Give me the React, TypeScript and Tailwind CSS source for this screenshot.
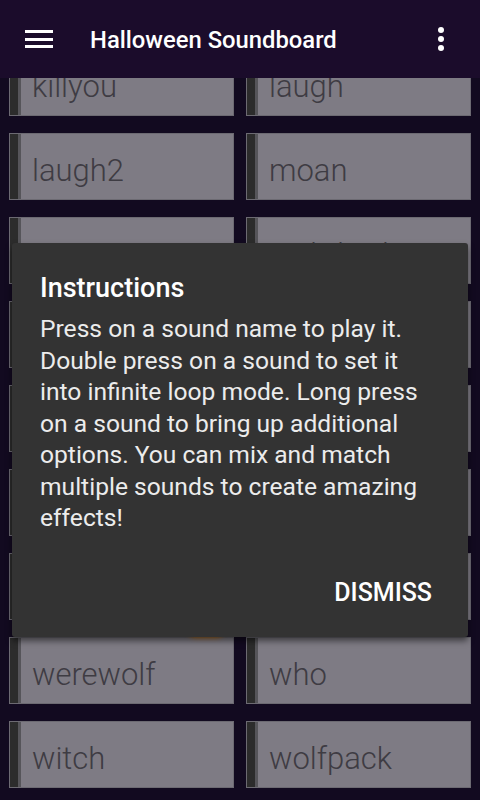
import React from 'react';

const sounds = [
  'killyou', 'laugh',
  'laugh2', 'moan',
  'moan2', 'nightbirds',
  'scream', 'scream2',
  'skeleton', 'spooky',
  'thunder', 'vampire',
  'whisper', 'wind',
  'werewolf', 'who',
  'witch', 'wolfpack',
];

const bodyLines = [
  'Press on a sound name to play it.',
  'Double press on a sound to set it',
  'into infinite loop mode. Long press',
  'on a sound to bring up additional',
  'options. You can mix and match',
  'multiple sounds to create amazing',
  'effects!',
];

function SoundButton({ name }: { name: string }) {
  return (
    <div className="flex h-[67px] border border-[#6c6a72] bg-[#7e7b84]">
      <div className="w-[8px] bg-[#2c2c2c]" />
      <div className="w-[3px] bg-[#56555a]" />
      <div className="flex flex-1 items-center pl-[11px] pt-[10px] text-[31px] font-light text-[#3e3c43]">
        {name}
      </div>
    </div>
  );
}

export default function App() {
  return (
    <div
      className="relative h-[800px] w-[480px] overflow-hidden bg-[#120a20]"
      style={{ fontFamily: 'Roboto, "Noto Sans", sans-serif' }}
    >
      {/* Toolbar */}
      <header className="relative z-10 flex h-[78px] items-center bg-[#1b0c2b] text-white">
        <div className="ml-[25px] flex w-[28px] flex-col gap-[4.5px]">
          <span className="h-[3px] bg-white" />
          <span className="h-[3px] bg-white" />
          <span className="h-[3px] bg-white" />
        </div>
        <h1 className="ml-[37px] mt-[3px] text-[23.8px] font-medium">Halloween Soundboard</h1>
        <div className="ml-auto mr-[36px] flex flex-col gap-[3px]">
          <span className="h-[6px] w-[6px] rounded-full bg-white" />
          <span className="h-[6px] w-[6px] rounded-full bg-white" />
          <span className="h-[6px] w-[6px] rounded-full bg-white" />
        </div>
      </header>

      {/* Sound grid */}
      <main className="-mt-[29px] grid grid-cols-2 gap-x-[12px] gap-y-[17px] px-[9px]">
        {sounds.map((s) => (
          <SoundButton key={s} name={s} />
        ))}
      </main>

      {/* glow peeking under dialog */}
      <div className="absolute left-[186px] top-[618px] h-[20px] w-[40px] rounded-full bg-[#b8701f] blur-[2px]" />

      {/* Instructions dialog */}
      <div className="absolute left-[12px] top-[243px] w-[456px] rounded-[3px] bg-[#333333] pb-[28px] pl-[28px] pr-[36px] pt-[29px] shadow-[0_4px_6px_rgba(0,0,0,0.5)]">
        <h2 className="text-[27px] font-medium leading-[32px] text-white">Instructions</h2>
        <p className="mt-[9px] text-[24.6px] leading-[31.5px] text-[#ececec]">
          {bodyLines.map((l) => (
            <span key={l} className="block whitespace-nowrap">
              {l}
            </span>
          ))}
        </p>
        <div className="mt-[43px] flex justify-end">
          <span className="text-[25px] font-medium leading-[32px] text-white">DISMISS</span>
        </div>
      </div>
    </div>
  );
}
